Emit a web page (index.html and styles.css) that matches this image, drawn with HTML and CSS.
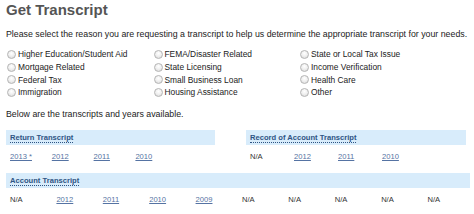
FILE: index.html
```html
<!DOCTYPE html>
<html lang="en">
<head>
    <meta charset="UTF-8">
    <title>Get Transcript</title>
    <link rel="stylesheet" href="styles.css">
</head>
<body>

<div class="page">
    <h1>Get Transcript</h1>
    <p class="intro">Please select the reason you are requesting a transcript to help us determine the appropriate transcript for your needs.</p>

    <div class="reasons">
        <label class="reason"><span class="radio"></span>Higher Education/Student Aid</label>
        <label class="reason"><span class="radio"></span>FEMA/Disaster Related</label>
        <label class="reason"><span class="radio"></span>State or Local Tax Issue</label>
        <label class="reason"><span class="radio"></span>Mortgage Related</label>
        <label class="reason"><span class="radio"></span>State Licensing</label>
        <label class="reason"><span class="radio"></span>Income Verification</label>
        <label class="reason"><span class="radio"></span>Federal Tax</label>
        <label class="reason"><span class="radio"></span>Small Business Loan</label>
        <label class="reason"><span class="radio"></span>Health Care</label>
        <label class="reason"><span class="radio"></span>Immigration</label>
        <label class="reason"><span class="radio"></span>Housing Assistance</label>
        <label class="reason"><span class="radio"></span>Other</label>
    </div>

    <p class="below">Below are the transcripts and years available.</p>

    <div class="transcripts">
        <table class="tx tx-return">
            <tr><th colspan="5"><span class="tx-title">Return Transcript</span></th></tr>
            <tr>
                <td><a href="#">2013 *</a></td>
                <td><a href="#">2012</a></td>
                <td><a href="#">2011</a></td>
                <td><a href="#">2010</a></td>
                <td></td>
            </tr>
        </table>

        <table class="tx tx-record">
            <tr><th colspan="5"><span class="tx-title">Record of Account Transcript</span></th></tr>
            <tr>
                <td>N/A</td>
                <td><a href="#">2012</a></td>
                <td><a href="#">2011</a></td>
                <td><a href="#">2010</a></td>
                <td></td>
            </tr>
        </table>

        <table class="tx tx-account">
            <tr><th colspan="10"><span class="tx-title">Account Transcript</span></th></tr>
            <tr>
                <td>N/A</td>
                <td><a href="#">2012</a></td>
                <td><a href="#">2011</a></td>
                <td><a href="#">2010</a></td>
                <td><a href="#">2009</a></td>
                <td>N/A</td>
                <td>N/A</td>
                <td>N/A</td>
                <td>N/A</td>
                <td>N/A</td>
            </tr>
        </table>
    </div>
</div>

</body>
</html>
```

FILE: styles.css
```css
/* page */
body {
    margin: 0;
    background: #fff;
    font-family: "Liberation Sans", Arial, sans-serif;
    color: #222;
}

.page {
    padding: 1px 4px 0 6px;
}

h1 {
    margin: 0;
    font-size: 15px;
    line-height: 18px;
    font-weight: bold;
    color: #555;
}

.intro,
.below {
    margin: 0;
    font-size: 8.8px;
    line-height: 11px;
}

.intro {
    margin-top: 9.5px;
}

.below {
    margin-top: 10.5px;
}

/* reasons */
.reasons {
    display: grid;
    grid-template-columns: 146.5px 146.5px 146.5px;
    grid-auto-rows: 12.7px;
    margin-top: 8.5px;
    font-size: 8.4px;
}

.reason {
    display: flex;
    align-items: center;
    white-space: nowrap;
}

.radio {
    width: 7px;
    height: 7px;
    margin: 0 2px 0 1px;
    border: 1px solid #b5b5b5;
    border-radius: 50%;
    background: radial-gradient(circle at 50% 35%, #fff 0%, #f1f1f1 45%, #d6d6d6 100%);
    flex: none;
}

/* transcripts */
.transcripts {
    display: grid;
    grid-template-columns: 209px 220px;
    column-gap: 31px;
    margin-top: 9.5px;
}

.tx {
    border-collapse: collapse;
    table-layout: fixed;
    font-size: 7.6px;
}

.tx-return { width: 209px; }
.tx-record { width: 220px; }

.tx-account {
    grid-column: 1 / 3;
    width: 464px;
    margin-top: 6px;
}

.tx th {
    height: 15px;
    padding: 0 4px;
    background: #d8ecfb;
    text-align: left;
}

.tx-title {
    color: #2f5584;
    font-weight: bold;
    border-bottom: 1px dotted #2f5584;
}

.tx td {
    padding: 6px 4px 5px;
    line-height: 11px;
    color: #333;
    white-space: nowrap;
}

.tx a {
    color: #5573a3;
    text-decoration: underline;
}
```
